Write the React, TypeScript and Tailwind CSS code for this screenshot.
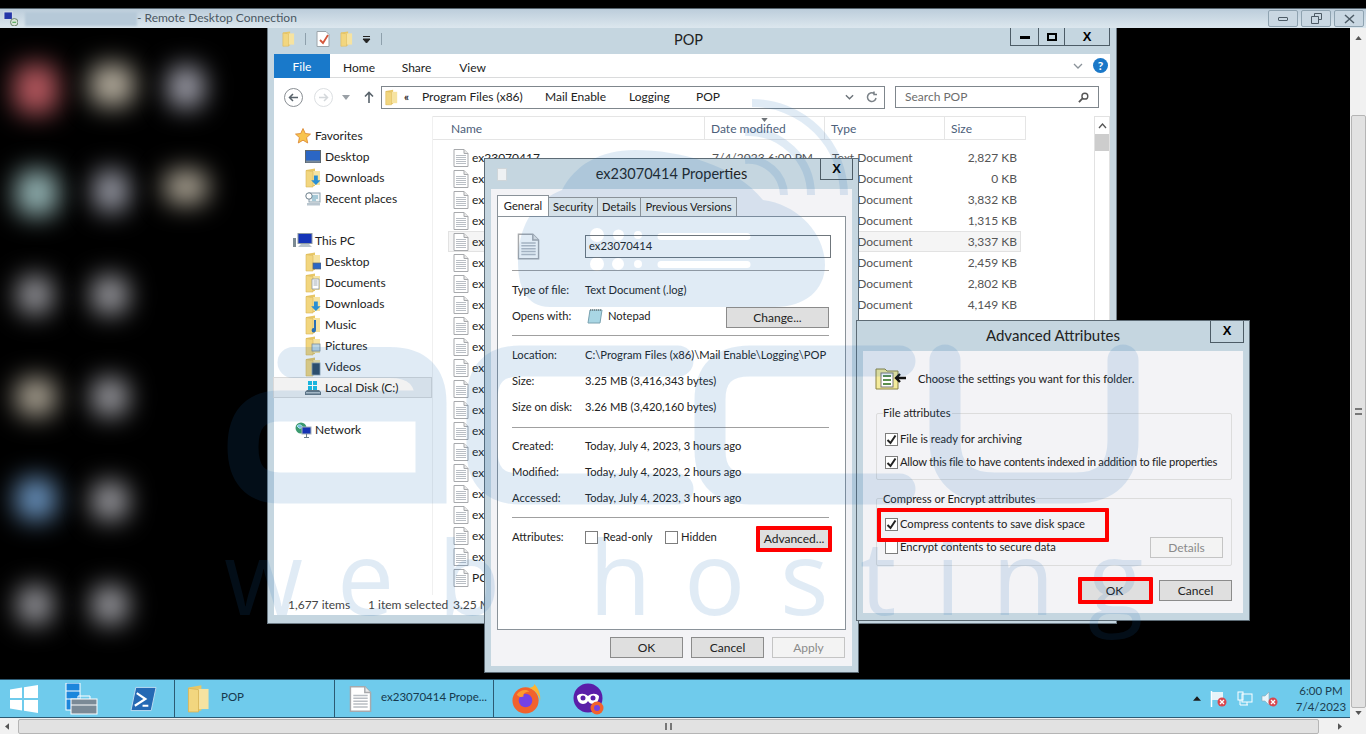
const navItems = [
  { label: 'Favorites', icon: 'star', indent: false },
  { label: 'Desktop', icon: 'monitor', indent: true },
  { label: 'Downloads', icon: 'download', indent: true },
  { label: 'Recent places', icon: 'recent', indent: true },
  { label: '', icon: '', indent: false },
  { label: 'This PC', icon: 'pc', indent: false },
  { label: 'Desktop', icon: 'folderDesk', indent: true },
  { label: 'Documents', icon: 'folderDoc', indent: true },
  { label: 'Downloads', icon: 'download', indent: true },
  { label: 'Music', icon: 'folderMusic', indent: true },
  { label: 'Pictures', icon: 'folderPic', indent: true },
  { label: 'Videos', icon: 'folderVid', indent: true },
  { label: 'Local Disk (C:)', icon: 'disk', indent: true, selected: true },
  { label: '', icon: '', indent: false },
  { label: 'Network', icon: 'network', indent: false },
]

const fileRows = [
  ['ex23070417', '7/4/2023 6:00 PM', 'Text Document', '2,827 KB'],
  ['ex23070416', '', 'Text Document', '0 KB'],
  ['ex23070415', '', 'Text Document', '3,832 KB'],
  ['ex23070413', '', 'Text Document', '1,315 KB'],
  ['ex23070414', '', 'Text Document', '3,337 KB'],
  ['ex23070412', '', 'Text Document', '2,459 KB'],
  ['ex23070411', '', 'Text Document', '2,802 KB'],
  ['ex23070410', '', 'Text Document', '4,149 KB'],
  ['ex23070409'],
  ['ex23070408'],
  ['ex23070407'],
  ['ex23070406'],
  ['ex23070405'],
  ['ex23070404'],
  ['ex23070403'],
  ['ex23070402'],
  ['ex23070401'],
  ['ex23070331'],
  ['ex23070330'],
  ['ex23070329'],
  ['POP'],
]

const blurSpots = [
  'left-[14px] top-[64px] w-[44px] h-[50px] bg-[#b4575e]',
  'left-[90px] top-[64px] w-[44px] h-[42px] bg-[#b8b0a0]',
  'left-[168px] top-[66px] w-[36px] h-[42px] bg-[#a4a4b0]',
  'left-[16px] top-[170px] w-[42px] h-[46px] bg-[#94b4b4]',
  'left-[94px] top-[170px] w-[34px] h-[42px] bg-[#a0a2ae]',
  'left-[164px] top-[170px] w-[44px] h-[34px] bg-[#b0a898]',
  'left-[18px] top-[276px] w-[34px] h-[38px] bg-[#a2a2a8]',
  'left-[92px] top-[276px] w-[36px] h-[38px] bg-[#a2a2a8]',
  'left-[16px] top-[378px] w-[40px] h-[38px] bg-[#b0a898]',
  'left-[92px] top-[378px] w-[36px] h-[38px] bg-[#a2a2a8]',
  'left-[16px] top-[478px] w-[40px] h-[42px] bg-[#6a94c0]',
  'left-[92px] top-[482px] w-[36px] h-[38px] bg-[#a2a2a8]',
  'left-[18px] top-[586px] w-[34px] h-[38px] bg-[#a2a2a8]',
  'left-[92px] top-[586px] w-[36px] h-[38px] bg-[#a2a2a8]',
]

const watermarkLetters = [
  ['w', 'left-[224px]'],
  ['e', 'left-[337px]'],
  ['b', 'left-[438px]'],
  ['h', 'left-[589px]'],
  ['o', 'left-[684px]'],
  ['s', 'left-[780px]'],
  ['t', 'left-[860px]'],
  ['i', 'left-[935px]'],
  ['n', 'left-[992px]'],
  ['g', 'left-[1088px]'],
]

const FileIcon = ({ className = 'w-[16px] h-[18px]' }: { className?: string }) => (
  <svg viewBox="0 0 16 18" className={className}>
    <path d="M1 .5h10l4 4v13H1z" fill="#fff" stroke="#a7a9ac" />
    <path d="M11 .5v4h4" fill="#e8e8e8" stroke="#a7a9ac" />
    <path d="M3 6.500h10M3 8.500h10M3 10.500h10M3 12.500h10M3 14.500h10" stroke="#b9bec4" />
  </svg>
)

const Folder = ({ className = 'w-[16px] h-[20px]', children }: { className?: string; children?: React.ReactNode }) => (
  <svg viewBox="0 0 16 20" className={className}>
    <path d="M1 2l9-1.500V18l-9 1z" fill="#e8c766" />
    <path d="M6 3h9v14H6z" fill="#f6e3a1" />
    <path d="M1 2.500l7 1V19l-7 0z" fill="#f2d67f" stroke="#d9b658" strokeWidth=".6" />
    {children}
  </svg>
)

const NavIcon = ({ name }: { name: string }) => {
  if (name === 'star')
    return (
      <svg viewBox="0 0 16 16" className="w-[16px] h-[16px]">
        <path d="M8 .5l2.300 5 5.200.6-3.900 3.500 1.100 5.400L8 12.200 3.300 15l1.100-5.400L.5 6.100l5.200-.6z" fill="#f8c44e" stroke="#d9822b" strokeWidth=".8" />
      </svg>
    )
  if (name === 'monitor')
    return (
      <svg viewBox="0 0 16 14" className="w-[16px] h-[14px]">
        <rect x=".5" y=".5" width="15" height="12" fill="#2b66c4" stroke="#5c6770" />
        <rect x="1" y="10.500" width="14" height="2" fill="#7a8a99" />
      </svg>
    )
  if (name === 'recent')
    return (
      <svg viewBox="0 0 16 14" className="w-[16px] h-[14px]">
        <rect x="4" y="1" width="11" height="9" fill="#eef3f6" stroke="#8ba0ad" />
        <circle cx="4" cy="4" r="3.200" fill="#fff" stroke="#6d7f8b" />
        <rect x="2" y="11" width="13" height="2.500" fill="#b9c6cf" />
        <path d="M7 4h6M7 6h6M7 8h4" stroke="#5f9fb8" />
      </svg>
    )
  if (name === 'pc')
    return (
      <svg viewBox="0 0 20 15" className="w-[20px] h-[15px]">
        <rect x="0" y="5" width="3" height="9" fill="#7c8a92" />
        <rect x="5" y=".5" width="14" height="10" fill="#1534b8" stroke="#8d9aa3" />
        <path d="M5 14h14l-3-3H8z" fill="#b8c4cc" />
      </svg>
    )
  if (name === 'disk')
    return (
      <svg viewBox="0 0 16 16" className="w-[16px] h-[16px]">
        <path d="M3 1h4v4H3zM8 1h4v4H8zM3 6h4v4H3zM8 6h4v4H8z" fill="#19b4dd" />
        <path d="M0 12l2-2h12l2 2v3H0z" fill="#66757f" />
        <rect x="1" y="12" width="14" height="1.500" fill="#b8c3c9" />
      </svg>
    )
  if (name === 'network')
    return (
      <svg viewBox="0 0 17 16" className="w-[17px] h-[16px]">
        <circle cx="6" cy="6" r="5.500" fill="#3b9a6f" />
        <path d="M2 4c2-2 4-1 5 0s-1 3-3 2zM7 9l3-2" stroke="#b8e4f2" fill="#6dbbe0" />
        <rect x="7" y="5" width="9" height="7" fill="#1734b4" stroke="#a4b0b8" />
        <path d="M11.500 12v3M9 15.500h5" stroke="#6c7c88" />
      </svg>
    )
  return (
    <Folder>
      {name === 'download' && <path d="M10 9h4v5h3l-5 5-5-5h3z" fill="#2a8fd3" transform="translate(-.5 -1) scale(.95)" />}
      {name === 'folderDesk' && <rect x="8" y="11" width="8" height="6" fill="#2b66c4" stroke="#5c6770" strokeWidth=".7" />}
      {name === 'folderDoc' && <path d="M7 6h7v10H7z M8.500 8h4M8.500 10h4M8.500 12h4" fill="#fff" stroke="#8a98a2" strokeWidth=".8" />}
      {name === 'folderMusic' && <path d="M11 5v10a2.200 2.200 0 1 1-2-2V5z" fill="#2a6fb5" />}
      {name === 'folderPic' && <rect x="7" y="8" width="8" height="7" fill="#bcd6e4" stroke="#7c8c96" strokeWidth=".8" />}
      {name === 'folderVid' && <rect x="7" y="6" width="8" height="12" fill="#2f4a62" stroke="#8ca0ae" strokeWidth=".8" />}
    </Folder>
  )
}

const Button = ({ label, disabled, className = '' }: { label: string; disabled?: boolean; className?: string }) => (
  <div
    className={`flex items-center justify-center border text-[12px] ${
      disabled ? 'border-[#c4c4c4] bg-[#f3f3f3] text-[#8a8a8a]' : 'border-[#8b8b8b] bg-[#dfdfdf] text-[#222]'
    } ${className}`}
  >
    {label}
  </div>
)

const Checkbox = ({ checked }: { checked?: boolean }) => (
  <div className="w-[13px] h-[13px] border border-[#7d7d7d] bg-white flex items-center justify-center shrink-0">
    {checked && (
      <svg viewBox="0 0 11 11" className="w-[11px] h-[11px]">
        <path d="M1.500 6l3 3 5-7.500" fill="none" stroke="#222" strokeWidth="2" />
      </svg>
    )}
  </div>
)

const CloseBox = ({ className }: { className: string }) => (
  <div className={`flex items-start justify-center border border-t-0 border-[#4d5c66] font-['Liberation_Sans',sans-serif] font-bold text-[13px] leading-[20px] text-black ${className}`}>
    X
  </div>
)

const Divider = ({ className }: { className: string }) => <div className={`h-px bg-[#a0a0a0] w-[317px] ${className}`} />

const PropRow = ({ label, value }: { label: string; value: string }) => (
  <div className="h-[26px] flex items-center whitespace-nowrap">
    <div className="w-[73px]">{label}</div>
    <div>{value}</div>
  </div>
)

const Explorer = () => (
  <div className="absolute left-[267px] top-[28px] w-[850px] h-[596px] bg-[#c5d6e0] border border-t-0 border-[#6d7b85] px-[6px] pb-[8px] flex flex-col text-[12px] text-[#222]">
    <div className="h-[26px] relative flex items-center justify-center shrink-0">
      <div className="absolute left-[8px] top-[3px] flex items-center gap-[10px]">
        <Folder className="w-[13px] h-[16px]" />
        <div className="w-px h-[12px] bg-[#8ea0ac]" />
        <svg viewBox="0 0 14 16" className="w-[14px] h-[16px]">
          <path d="M1 .5h9l3 3v12H1z" fill="#fff" stroke="#9ba4aa" />
          <path d="M4 9l3 3 5-8" fill="none" stroke="#d4573c" strokeWidth="1.800" />
        </svg>
        <Folder className="w-[13px] h-[16px]" />
        <svg viewBox="0 0 9 9" className="w-[9px] h-[9px] -ml-[1px]">
          <path d="M1 1.500h7M1 4h7L4.500 8z" stroke="#222" fill="#222" />
        </svg>
        <div className="w-px h-[12px] bg-[#8ea0ac]" />
      </div>
      <span className="text-[14.500px] text-[#222] pb-[2px] pr-[7px]">POP</span>
      <div className="absolute right-[0px] top-0 h-[18px] flex border border-t-0 border-[#4d5c66] text-black">
        <div className="w-[28px] border-r border-[#4d5c66] flex items-center justify-center">
          <div className="w-[10px] h-[3px] bg-black mt-[2px]" />
        </div>
        <div className="w-[26px] border-r border-[#4d5c66] flex items-center justify-center">
          <div className="w-[10px] h-[8px] border-2 border-black" />
        </div>
        <div className="w-[44px] flex items-center justify-center font-['Liberation_Sans',sans-serif] font-bold text-[13px]">X</div>
      </div>
    </div>

    <div className="flex-1 bg-white flex flex-col min-h-0">
      <div className="h-[24px] flex items-center border-b border-[#dadbdc] shrink-0 relative">
        <div className="w-[56px] h-[24px] bg-[#1979ca] text-white flex items-center justify-center pt-[2px]">File</div>
        <div className="w-[58px] text-center pt-[4px]">Home</div>
        <div className="w-[57px] text-center pt-[4px]">Share</div>
        <div className="w-[55px] text-center pt-[4px]">View</div>
        <svg viewBox="0 0 10 6" className="absolute right-[27px] top-[9px] w-[10px] h-[6px]">
          <path d="M1 1l4 4 4-4" fill="none" stroke="#8a9299" strokeWidth="1.300" />
        </svg>
        <div className="absolute right-[2px] top-[4px] w-[15px] h-[15px] rounded-full bg-[#1b78c8] text-white text-[12px] font-bold flex items-center justify-center">
          ?
        </div>
      </div>

      <div className="h-[38px] flex items-center shrink-0 relative">
        <div className="w-[19px] h-[19px] ml-[10px] rounded-full border border-[#8a8f94] flex items-center justify-center">
          <svg viewBox="0 0 11 9" className="w-[11px] h-[9px]">
            <path d="M10 4.500H2M5 1L1.500 4.500 5 8" fill="none" stroke="#59636b" strokeWidth="1.500" />
          </svg>
        </div>
        <div className="w-[19px] h-[19px] ml-[11px] rounded-full border border-[#dcdfe2] flex items-center justify-center">
          <svg viewBox="0 0 11 9" className="w-[11px] h-[9px]">
            <path d="M1 4.500h8M6 1l3.500 3.500L6 8" fill="none" stroke="#d4d8db" strokeWidth="1.500" />
          </svg>
        </div>
        <svg viewBox="0 0 8 5" className="w-[8px] h-[5px] ml-[9px]">
          <path d="M0 0h8L4 5z" fill="#9aa0a6" />
        </svg>
        <svg viewBox="0 0 10 12" className="w-[10px] h-[12px] ml-[14px]">
          <path d="M5 12V2M1 5.500L5 1.500l4 4" fill="none" stroke="#59636b" strokeWidth="1.600" />
        </svg>
        <div className="ml-[7px] w-[504px] h-[23px] border border-[#7f868c] flex items-center pl-[3px]">
          <Folder className="w-[13px] h-[17px]" />
          <span className="ml-[6px] w-[10px] font-bold text-[11px]">«</span>
          <span className="ml-[8px] w-[123px]">Program Files (x86)</span>
          <span className="w-[84px]">Mail Enable</span>
          <span className="w-[67px]">Logging</span>
          <span>POP</span>
          <svg viewBox="0 0 10 6" className="w-[9px] h-[6px] ml-auto mr-[12px]">
            <path d="M1 1l4 4 4-4" fill="none" stroke="#6b7278" strokeWidth="1.500" />
          </svg>
          <svg viewBox="0 0 12 12" className="w-[12px] h-[12px] mr-[6px]">
            <path d="M10 7a4.300 4.300 0 1 1-2-4.500M8 .5v3h3" fill="none" stroke="#7b8288" strokeWidth="1.500" />
          </svg>
        </div>
        <div className="ml-[10px] w-[204px] h-[22px] border border-[#7f868c] flex items-center pl-[9px] pr-[9px] text-[#6d6d6d] justify-between">
          <span>Search POP</span>
          <svg viewBox="0 0 12 12" className="w-[11px] h-[11px]">
            <circle cx="7.500" cy="4.500" r="3.200" fill="none" stroke="#555" strokeWidth="1.500" />
            <path d="M5 7l-4 4" stroke="#555" strokeWidth="2" />
          </svg>
        </div>
      </div>

      <div className="flex-1 flex min-h-0 relative">
        <div className="w-[159px] shrink-0 border-r border-[#f0f0f0] pt-[9px] flex flex-col">
          {navItems.map((item, i) => (
            <div
              key={i}
              className={`h-[21px] flex items-center shrink-0 ${item.indent ? 'pl-[30px]' : 'pl-[20px]'} ${
                item.selected ? 'bg-[#f2f2f2] border border-[#d9d9d9] -ml-[1px]' : ''
              }`}
            >
              {item.label && (
                <>
                  <div className="w-[20px] flex justify-center -ml-[1px] mr-[2px]">
                    <NavIcon name={item.icon} />
                  </div>
                  <span>{item.label}</span>
                </>
              )}
            </div>
          ))}
        </div>

        <div className="flex-1 flex flex-col min-w-0 relative">
          <div className="h-[24px] w-[593px] flex border border-[#e5e5e5] border-l-0 text-[#4c607a] shrink-0 relative">
            <div className="w-[272px] pl-[18px] border-r border-[#e5e5e5] flex items-center pt-[1px]">Name</div>
            <div className="w-[120px] pl-[6px] border-r border-[#e5e5e5] flex items-center pt-[1px]">Date modified</div>
            <div className="w-[120px] pl-[6px] border-r border-[#e5e5e5] flex items-center pt-[1px]">Type</div>
            <div className="pl-[6px] flex items-center pt-[1px]">Size</div>
            <svg viewBox="0 0 8 5" className="absolute left-[328px] top-[1px] w-[7px] h-[4px]">
              <path d="M0 0h8L4 5z" fill="#6e7378" />
            </svg>
          </div>
          <div className="pt-[7px] flex flex-col text-[#555]">
            {fileRows.map((row, i) => (
              <div
                key={i}
                className={`h-[21px] w-[573px] ml-[15px] flex items-center shrink-0 border ${
                  i === 4 ? 'bg-[#f5f5f5] border-[#e2e2e2]' : 'border-transparent'
                }`}
              >
                <div className="w-[263px] pl-[4px] flex items-center gap-[2px]">
                  <FileIcon />
                  <span className="text-[#222] ml-[1px]">{row[0]}</span>
                </div>
                <div className="w-[120px]">{row[1]}</div>
                <div className="w-[120px]">{row[2]}</div>
                <div className="w-[65px] text-right">{row[3]}</div>
              </div>
            ))}
          </div>
          <div className="absolute right-0 top-0 bottom-0 w-[16px] border border-[#e2e2e2] flex flex-col bg-white">
            <div className="h-[17px] flex items-center justify-center">
              <svg viewBox="0 0 9 6" className="w-[9px] h-[6px]">
                <path d="M1 5l3.500-4L8 5" fill="none" stroke="#555" strokeWidth="1.300" />
              </svg>
            </div>
            <div className="h-[17px] bg-[#cdcdcd]" />
          </div>
        </div>

        <div className="absolute left-[14px] bottom-0 h-[20px] w-[230px] flex items-center text-[#444] bg-white whitespace-nowrap">
          <span className="w-[80px] shrink-0">1,677 items</span>
          <span className="w-[85px] shrink-0">1 item selected</span>
          <span>3.25 MB</span>
        </div>
      </div>
    </div>
  </div>
)

const PropertiesDialog = () => (
  <div className="absolute left-[484px] top-[158px] w-[375px] h-[515px] bg-[#c5d6e0] border border-[#5d6b75] flex flex-col text-[11.200px] text-[#222]">
    <div className="h-[30px] relative flex items-center justify-center shrink-0">
      <div className="absolute left-[12px] top-[9px] w-[10px] h-[13px] bg-[#eef1f3] border border-[#cfd6da]" />
      <span className="text-[14.500px] pb-[1px]">ex23070414 Properties</span>
      <CloseBox className="absolute right-[5px] top-0 w-[33px] h-[21px]" />
    </div>
    <div className="flex-1 mx-[6px] mb-[6px] bg-[#f3f3f6] px-[6px] pt-[7px] flex flex-col">
      <div className="flex h-[20px] items-end relative z-10">
        <div className="w-[52px] h-[21px] bg-white border border-b-0 border-[#8a9299] flex items-center justify-center">General</div>
        {[
          ['Security', 'w-[49px]'],
          ['Details', 'w-[43px]'],
          ['Previous Versions', 'w-[96px]'],
        ].map(([tab, width]) => (
          <div key={tab} className={`${width} h-[19px] bg-[#d5e1e9] border border-b-0 border-l-0 border-[#8a9299] flex items-center justify-center whitespace-nowrap`}>
            {tab}
          </div>
        ))}
      </div>
      <div className="h-[414px] bg-white border border-[#8a9299] pl-[14px] flex flex-col">
        <div className="mt-[15px] h-[28px] flex items-center">
          <FileIcon className="w-[23px] h-[27px] ml-[5px]" />
          <div className="ml-[45px] w-[246px] h-[23px] border border-[#6f767c] flex items-center pl-[3px]">ex23070414</div>
        </div>
        <Divider className="mt-[10px]" />
        <div className="mt-[6px]" />
        <PropRow label="Type of file:" value="Text Document (.log)" />
        <div className="h-[26px] flex items-center relative">
          <div className="w-[73px]">Opens with:</div>
          <svg viewBox="0 0 16 16" className="w-[16px] h-[16px] ml-[2px]">
            <path d="M3 2h12l-2 13H1z" fill="#a9d6e4" stroke="#7aa2b0" />
            <path d="M3 2h12" stroke="#555" strokeDasharray="1 1" />
          </svg>
          <span className="ml-[5px]">Notepad</span>
          <Button label="Change..." className="absolute left-[214px] top-[4px] w-[103px] h-[21px]" />
        </div>
        <Divider className="mt-[6px]" />
        <div className="mt-[6px]" />
        <PropRow label="Location:" value="C:\Program Files (x86)\Mail Enable\Logging\POP" />
        <PropRow label="Size:" value="3.25 MB (3,416,343 bytes)" />
        <PropRow label="Size on disk:" value="3.26 MB (3,420,160 bytes)" />
        <Divider className="mt-[7px]" />
        <div className="mt-[5px]" />
        <PropRow label="Created:" value="Today, July 4, 2023, 3 hours ago" />
        <PropRow label="Modified:" value="Today, July 4, 2023, 2 hours ago" />
        <PropRow label="Accessed:" value="Today, July 4, 2023, 3 hours ago" />
        <Divider className="mt-[6px]" />
        <div className="mt-[6px] h-[26px] flex items-center relative">
          <div className="w-[73px]">Attributes:</div>
          <Checkbox />
          <span className="ml-[5px] w-[49px] shrink-0 whitespace-nowrap">Read-only</span>
          <div className="ml-[13px]">
            <Checkbox />
          </div>
          <span className="ml-[3px]">Hidden</span>
          <Button label="Advanced..." className="absolute left-[246px] top-[3px] w-[72px] h-[24px]" />
        </div>
      </div>
      <div className="flex justify-end gap-[8px] mt-[7px] pr-[1px]">
        <Button label="OK" className="w-[73px] h-[21px]" />
        <Button label="Cancel" className="w-[73px] h-[21px]" />
        <Button label="Apply" disabled className="w-[73px] h-[21px]" />
      </div>
    </div>
  </div>
)

const AdvancedDialog = () => (
  <div className="absolute left-[856px] top-[320px] w-[394px] h-[301px] bg-[#c5d6e0] border border-[#5d6b75] flex flex-col text-[11.200px] text-[#222]">
    <div className="h-[30px] relative flex items-center justify-center shrink-0">
      <span className="text-[15px] pb-[1px]">Advanced Attributes</span>
      <CloseBox className="absolute right-[5px] top-0 w-[34px] h-[22px]" />
    </div>
    <div className="flex-1 mx-[6px] mb-[7px] bg-[#f3f3f6] pl-[13px] pr-[11px] flex flex-col">
      <div className="mt-[15px] flex items-center h-[24px] -ml-[1px]">
        <svg viewBox="0 0 32 24" className="w-[32px] h-[24px]">
          <path d="M1 3h9l2 2h11v18H1z" fill="#f4eb9c" stroke="#8b8340" />
          <rect x="6" y="7" width="12" height="14" fill="#fff" stroke="#777" />
          <path d="M8 10h8M8 14h8M8 18h8" stroke="#5b8f4e" strokeWidth="2" />
          <path d="M31 12H22M25 8l-4 4 4 4" fill="none" stroke="#111" strokeWidth="2.400" />
        </svg>
        <span className="ml-[11px] pt-[2px]">Choose the settings you want for this folder.</span>
      </div>
      <div className="mt-[23px] h-[67px] border border-[#dcdcdc] rounded-[2px] relative px-[8px] pt-[19px] flex flex-col gap-[10px]">
        <span className="absolute left-[6px] -top-[9px] bg-[#f3f3f6] pr-[1px]">File attributes</span>
        <div className="flex items-center gap-[2px] h-[13px]">
          <Checkbox checked />
          <span>File is ready for archiving</span>
        </div>
        <div className="flex items-center gap-[2px] h-[13px]">
          <Checkbox checked />
          <span className="whitespace-nowrap tracking-[-0.2px]">Allow this file to have contents indexed in addition to file properties</span>
        </div>
      </div>
      <div className="mt-[18px] h-[68px] border border-[#dcdcdc] rounded-[2px] relative px-[8px] pt-[19px] flex flex-col gap-[10px]">
        <span className="absolute left-[6px] -top-[8px] bg-[#f3f3f6] pr-[1px]">Compress or Encrypt attributes</span>
        <div className="flex items-center gap-[2px] h-[13px]">
          <Checkbox checked />
          <span>Compress contents to save disk space</span>
        </div>
        <div className="flex items-center gap-[2px] h-[13px]">
          <Checkbox />
          <span>Encrypt contents to secure data</span>
        </div>
        <Button label="Details" disabled className="absolute right-[8px] top-[38px] w-[73px] h-[21px]" />
      </div>
      <div className="flex justify-end gap-[8px] mt-[14px]">
        <Button label="OK" className="w-[73px] h-[21px]" />
        <Button label="Cancel" className="w-[73px] h-[21px]" />
      </div>
    </div>
  </div>
)

const Watermark = () => (
  <div className="absolute inset-0 opacity-[.13] pointer-events-none text-[#1a6bb8]">
    <svg viewBox="0 0 1366 734" className="absolute inset-0 w-[1366px] h-[734px]">
      <g fill="none" stroke="#1a6bb8" strokeWidth="31">
        <path d="M293 362.500H390Q431 362.500 431 403V488H280Q243 488 243 447Q243 406 280 406H431" strokeLinecap="round" />
        <path d="M678 361H520Q482 361 482 400V450Q482 489 520 489H678" strokeLinecap="round" />
        <path d="M900 361H750Q710 361 710 400V450Q710 489 750 489H900" strokeLinecap="round" />
        <path d="M945 360V440Q945 488 995 488H1075Q1123 488 1123 440V360" strokeLinecap="round" />
      </g>
      <path
        fillRule="evenodd"
        fill="#1a6bb8"
        d="M550 307C525 307 518 285 518 262C518 225 535 200 562 190C575 165 600 150 635 150C680 150 735 165 763 200C800 205 825 235 825 265C825 290 805 307 775 307Z
        M590 235a7 7 0 1 0 14 0a7 7 0 1 0-14 0ZM613 235a5.500 5.500 0 1 0 11 0a5.500 5.500 0 1 0-11 0ZM634 235a4 4 0 1 0 8 0a4 4 0 1 0-8 0Z
        M590 264a7 7 0 1 0 14 0a7 7 0 1 0-14 0ZM612 264a6 6 0 1 0 12 0a6 6 0 1 0-12 0ZM634 264a4 4 0 1 0 8 0a4 4 0 1 0-8 0Z
        M661 233H747a3.500 3.500 0 0 1 0 7H661a3.500 3.500 0 0 1 0-7ZM661 261H747a3.500 3.500 0 0 1 0 7H661a3.500 3.500 0 0 1 0-7Z"
      />
      <g fill="none" stroke="#1a6bb8" strokeWidth="8">
        <path d="M752 103A92 92 0 0 1 844 195" />
        <path d="M745 132A63 63 0 0 1 811 195" />
        <path d="M745 160A36 36 0 0 1 784 195" />
      </g>
    </svg>
    {watermarkLetters.map(([letter, left]) => (
      <span key={letter} className={`absolute top-[504px] ${left} font-['Open_Sans',sans-serif] font-normal text-[102px] leading-[144px]`}>
        {letter}
      </span>
    ))}
  </div>
)

const Taskbar = () => (
  <div className="absolute left-0 top-[679px] w-[1350px] h-[39px] bg-[#6fcbec] border-t border-[#2c5a73] border-b border-b-[#2c5a73] flex items-center text-[11.500px] text-[#16394d]">
    <div className="w-[175px] h-full flex items-center border-r border-[#2c5a73] shrink-0">
      <svg viewBox="0 0 28 28" className="w-[28px] h-[28px] ml-[10px]">
        <path d="M0 4.500l12-2v10.500H0zM14 2.200L28 0v13H14zM0 15h12v10.500l-12-2zM14 15h14v13l-14-2.200z" fill="#fff" />
      </svg>
      <svg viewBox="0 0 33 32" className="w-[33px] h-[32px] ml-[27px]">
        <rect x="1" y="0" width="14" height="27" fill="#1c86dc" stroke="#fff" />
        <path d="M1 8h14M1 16h14" stroke="#fff" />
        <rect x="6" y="16" width="26" height="15" fill="#7b8a96" stroke="#fff" />
        <path d="M13 16v-3h12v3M6 22h26" fill="none" stroke="#fff" />
      </svg>
      <svg viewBox="0 0 28 26" className="w-[27px] h-[26px] ml-[32px]">
        <path d="M6 1h21l-5 24H1z" fill="#2469b4" stroke="#bcdcf0" />
        <path d="M7 7l9 6-11 7M13 20h6" fill="none" stroke="#fff" strokeWidth="2.200" />
      </svg>
    </div>
    <div className="w-[160px] h-full flex items-center border-r border-[#2c5a73] shrink-0 pl-[12px]">
      <Folder className="w-[23px] h-[30px]" />
      <span className="ml-[11px] pb-[3px]">POP</span>
    </div>
    <div className="w-[159px] h-full flex items-center border-r border-[#2c5a73] shrink-0 pl-[14px]">
      <FileIcon className="w-[23px] h-[28px]" />
      <span className="ml-[9px] pb-[3px] whitespace-nowrap">ex23070414 Prope...</span>
    </div>
    <svg viewBox="0 0 32 32" className="w-[31px] h-[31px] ml-[17px]">
      <circle cx="15" cy="18" r="13.500" fill="#f2622c" />
      <path d="M15 5c6-1 14 5 15 13 1-7-2-13-6-17 0 3-3 4-9 4z" fill="#ffb42e" />
      <circle cx="15" cy="18" r="7" fill="#7542e5" />
      <path d="M6 12c3-5 10-6 13-3-4 0-7 2-6 5-3 1-5 0-7-2z" fill="#ff9a2e" />
    </svg>
    <svg viewBox="0 0 32 32" className="w-[32px] h-[32px] ml-[31px]">
      <circle cx="15" cy="15" r="14.500" fill="#5a1ea8" />
      <path d="M4 13c3-3 7-3 11 0 4-3 8-3 11 0 0 5-3 8-6 8-2 0-4-1-5-3-1 2-3 3-5 3-3 0-6-3-6-8z" fill="#fff" />
      <circle cx="10" cy="15" r="2.500" fill="#5a1ea8" />
      <circle cx="20" cy="15" r="2.500" fill="#5a1ea8" />
      <circle cx="24" cy="25" r="6.500" fill="#f2622c" />
      <circle cx="24" cy="25" r="3" fill="#7542e5" />
    </svg>
    <div className="ml-auto flex items-center">
      <svg viewBox="0 0 9 5" className="w-[8px] h-[5px]">
        <path d="M0 5h9L4.500 0z" fill="#1b1b1b" />
      </svg>
      <svg viewBox="0 0 18 16" className="w-[18px] h-[16px] ml-[9px]">
        <path d="M1.500 0v16" stroke="#fff" strokeWidth="1.500" />
        <path d="M2 1h11v8H2z" fill="#e6f4fa" />
        <circle cx="12" cy="11" r="4.500" fill="#d9474f" />
        <path d="M10 9l4 4M14 9l-4 4" stroke="#fff" strokeWidth="1.300" />
      </svg>
      <svg viewBox="0 0 16 16" className="w-[16px] h-[16px] ml-[9px]">
        <rect x="1" y="1" width="5" height="8" fill="none" stroke="#fff" />
        <rect x="5" y="3" width="10" height="8" fill="none" stroke="#fff" />
        <path d="M3 9v5h8M10 11v3" fill="none" stroke="#fff" />
      </svg>
      <svg viewBox="0 0 18 16" className="w-[18px] h-[16px] ml-[8px]">
        <path d="M1 5h3l4-4v13l-4-4H1z" fill="#eaf6fb" stroke="#8da6b2" strokeWidth=".6" />
        <circle cx="12" cy="11" r="4.500" fill="#d9474f" />
        <path d="M10 9l4 4M14 9l-4 4" stroke="#fff" strokeWidth="1.300" />
      </svg>
      <div className="w-[58px] ml-[13px] text-center leading-[16px] text-[#1c3e50]">
        <div>6:00 PM</div>
        <div>7/4/2023</div>
      </div>
    </div>
  </div>
)

const Scrollbars = () => (
  <>
    <div className="absolute left-[1350px] top-[28px] w-[16px] h-[706px] bg-[#f1f1f1] flex flex-col items-center">
      <svg viewBox="0 0 8 5" className="w-[7px] h-[4px] mt-[8px]">
        <path d="M0 5h8L4 0z" fill="#555" />
      </svg>
      <div className="mt-[75px] w-[15px] h-[593px] border border-[#b5b5b5] rounded-[2px] bg-[#e2e2e2] flex items-center justify-center">
        <div className="w-[7px] h-[7px] border-y-2 border-[#777]" />
      </div>
      <svg viewBox="0 0 8 5" className="w-[7px] h-[4px] mt-[3px]">
        <path d="M0 0h8L4 5z" fill="#555" />
      </svg>
    </div>
    <div className="absolute left-0 top-[718px] w-[1350px] h-[16px] bg-[#f1f1f1] flex items-center">
      <svg viewBox="0 0 5 8" className="w-[4px] h-[7px] ml-[5px]">
        <path d="M5 0v8L0 4z" fill="#555" />
      </svg>
      <div className="ml-[9px] w-[1301px] h-[15px] border border-[#b5b5b5] rounded-[2px] bg-[#e2e2e2] flex items-center justify-center">
        <div className="w-[7px] h-[7px] border-x-2 border-[#777]" />
      </div>
      <svg viewBox="0 0 5 8" className="w-[4px] h-[7px] ml-[19px]">
        <path d="M0 0v8l5-4z" fill="#555" />
      </svg>
    </div>
  </>
)

const App = () => {
  return (
    <div className="relative w-[1366px] h-[734px] bg-black overflow-hidden font-['Lato','Noto_Sans',sans-serif]">
      <div className="absolute left-0 top-[8px] w-[1366px] h-[20px] bg-gradient-to-b from-[#bccddb] to-[#dce7ee] border-t border-[#55636d] flex items-center text-[12px] text-[#4a5762]">
        <svg viewBox="0 0 16 16" className="w-[15px] h-[15px] ml-[3px]">
          <rect x="1" y="1" width="9" height="8" fill="#2536a8" stroke="#dfe6ea" />
          <circle cx="12" cy="12" r="4" fill="#d8e4d8" stroke="#688068" />
          <path d="M10 12h4" stroke="#2f9b3a" />
        </svg>
        <div className="ml-[7px] w-[112px] h-[14px] bg-[#b6c9d8] blur-[1px]" />
        <span className="pb-[1px]">- Remote Desktop Connection</span>
        <div className="ml-auto flex gap-[3px] mr-[2px]">
          {['min', 'restore', 'close'].map((name) => (
            <div key={name} className="w-[30px] h-[17px] border border-[#8fa3b1] rounded-[2px] bg-[#c9d7e2] flex items-center justify-center">
              {name === 'min' && <div className="w-[10px] h-[4px] border border-[#4d5b66] rounded-[1px]" />}
              {name === 'restore' && (
                <svg viewBox="0 0 11 11" className="w-[11px] h-[11px]">
                  <path d="M3.500 3V.5h7v6H8M.5 3.500h7v7h-7z" fill="none" stroke="#4d5b66" />
                </svg>
              )}
              {name === 'close' && (
                <svg viewBox="0 0 11 10" className="w-[11px] h-[10px]">
                  <path d="M1 1l9 8M10 1l-9 8" stroke="#4d5b66" strokeWidth="1.500" />
                </svg>
              )}
            </div>
          ))}
        </div>
      </div>

      {blurSpots.map((spot) => (
        <div key={spot} className={`absolute rounded-[14px] blur-[13px] ${spot}`} />
      ))}

      <Explorer />
      <PropertiesDialog />
      <AdvancedDialog />
      <Watermark />
      <Taskbar />
      <Scrollbars />

      <div className="absolute left-[756px] top-[526px] w-[76px] h-[26px] border-[4px] border-[#ff0000] rounded-[1px]" />
      <div className="absolute left-[877px] top-[508px] w-[232px] h-[34px] border-[4px] border-[#ff0000] rounded-[1px]" />
      <div className="absolute left-[1078px] top-[577px] w-[75px] h-[27px] border-[4px] border-[#ff0000] rounded-[1px]" />
    </div>
  )
}

export default App
